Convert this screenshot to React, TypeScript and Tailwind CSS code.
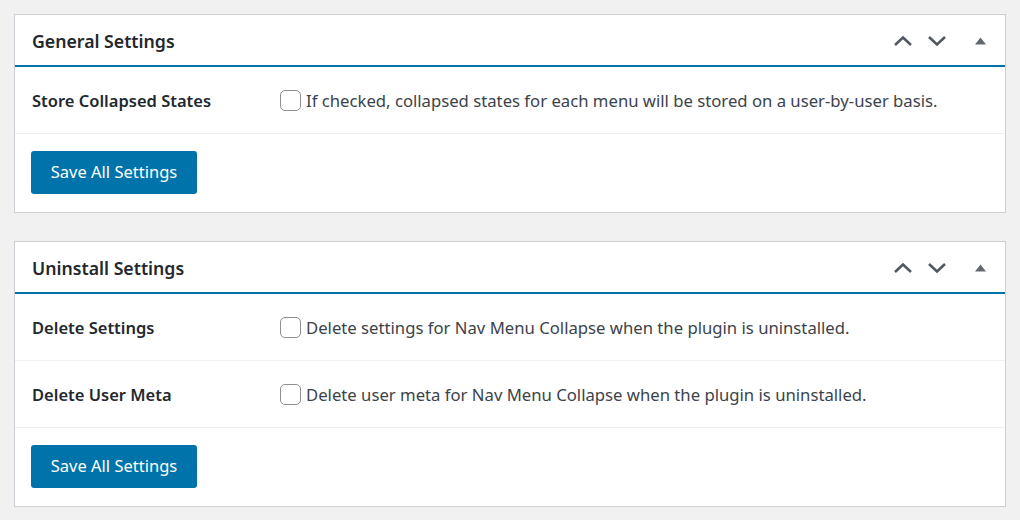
import React from "react";

const font = { fontFamily: '"Noto Sans", "Open Sans", Arial, sans-serif' };

function HeaderIcons() {
  return (
    <div className="flex items-center">
      <svg width="20" height="12" viewBox="0 0 20 12" className="mr-[14px]">
        <path d="M2 10 L10 2.5 L18 10" fill="none" stroke="#50575e" strokeWidth="2.5" />
      </svg>
      <svg width="20" height="12" viewBox="0 0 20 12" className="mr-[28px]">
        <path d="M2 2 L10 9.5 L18 2" fill="none" stroke="#50575e" strokeWidth="2.5" />
      </svg>
      <svg width="11" height="8" viewBox="0 0 11 8" className="mr-[19px]">
        <path d="M0 7.5 L5.5 0.5 L11 7.5 Z" fill="#646970" />
      </svg>
    </div>
  );
}

function Row({ label, desc }: { label: string; desc: string }) {
  return (
    <div className="flex items-center h-[67px] border-b border-[#f0f0f1] pl-[17px] pt-[2px]">
      <div className="w-[248px] text-[16.5px] font-semibold text-[#23282d]">{label}</div>
      <div className="flex items-center">
        <span className="w-[21px] h-[21px] rounded-[5px] border border-[#8c8f94] bg-white mr-[5px] shrink-0" />
        <span className="text-[16.7px] text-[#3c434a]">{desc}</span>
      </div>
    </div>
  );
}

function Box({ title, rows }: { title: string; rows: { label: string; desc: string }[] }) {
  return (
    <div className="bg-white border border-[#ccd0d4]">
      <div className="flex items-center justify-between h-[52px] border-b-2 border-[#0073aa] pl-[17px] pt-[2px]">
        <div className="text-[17.7px] font-semibold text-[#23282d]">{title}</div>
        <HeaderIcons />
      </div>
      {rows.map((r) => (
        <Row key={r.label} label={r.label} desc={r.desc} />
      ))}
      <div className="pl-[16px] pt-[17px] pb-[18px]">
        <button className="h-[43px] w-[166px] rounded-[3px] bg-[#0073aa] text-white text-[16.5px] flex items-center justify-center">
          Save All Settings
        </button>
      </div>
    </div>
  );
}

export default function App() {
  return (
    <div className="w-[1020px] h-[520px] bg-[#f1f1f1] px-[14px] pt-[14px] overflow-hidden" style={font}>
      <Box
        title="General Settings"
        rows={[
          {
            label: "Store Collapsed States",
            desc: "If checked, collapsed states for each menu will be stored on a user-by-user basis.",
          },
        ]}
      />
      <div className="h-[28px]" />
      <Box
        title="Uninstall Settings"
        rows={[
          { label: "Delete Settings", desc: "Delete settings for Nav Menu Collapse when the plugin is uninstalled." },
          { label: "Delete User Meta", desc: "Delete user meta for Nav Menu Collapse when the plugin is uninstalled." },
        ]}
      />
    </div>
  );
}
